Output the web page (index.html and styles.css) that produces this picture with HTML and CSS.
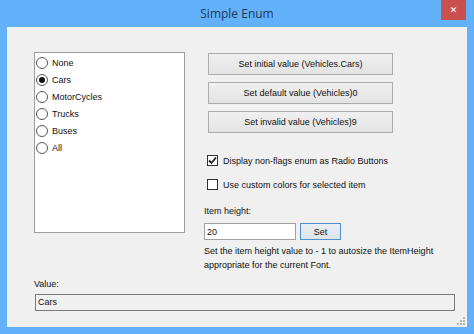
FILE: index.html
```html
<!DOCTYPE html>
<html lang="en">
<head>
    <meta charset="UTF-8">
    <title>Simple Enum</title>
    <link rel="stylesheet" href="styles.css">
</head>
<body>
    <div class="window">
        <div class="titlebar">
            <span class="title">Simple Enum</span>
            <button class="close" type="button">&#x2715;</button>
        </div>
        <div class="client">
            <div class="main-row">
                <div class="listbox">
                    <label class="radio-item"><input type="radio" name="vehicle"><span>None</span></label>
                    <label class="radio-item"><input type="radio" name="vehicle" checked><span>Cars</span></label>
                    <label class="radio-item"><input type="radio" name="vehicle"><span>MotorCycles</span></label>
                    <label class="radio-item"><input type="radio" name="vehicle"><span>Trucks</span></label>
                    <label class="radio-item"><input type="radio" name="vehicle"><span>Buses</span></label>
                    <label class="radio-item"><input type="radio" name="vehicle"><span>All</span></label>
                </div>
                <div class="side">
                    <div class="actions">
                        <button class="btn" type="button">Set initial value (Vehicles.Cars)</button>
                        <button class="btn" type="button">Set default value (Vehicles)0</button>
                        <button class="btn" type="button">Set invalid value (Vehicles)9</button>
                    </div>
                    <div class="options">
                        <label class="check-row">
                            <span class="checkbox checked">
                                <svg width="9" height="9" viewBox="0 0 9 9"><polyline points="1,4.5 3.5,7 8,1.5" fill="none" stroke="#222" stroke-width="1.8"/></svg>
                            </span>
                            <span>Display non-flags enum as Radio Buttons</span>
                        </label>
                        <label class="check-row">
                            <span class="checkbox"></span>
                            <span>Use custom colors for selected item</span>
                        </label>
                    </div>
                    <div class="item-height">
                        <div class="field-label">Item height:</div>
                        <div class="input-row">
                            <input class="text-input" type="text" value="20">
                            <button class="btn btn-set" type="button">Set</button>
                        </div>
                        <p class="help">Set the item height value to - 1 to autosize the ItemHeight<br>appropriate for the current Font.</p>
                    </div>
                </div>
            </div>
            <div class="value-section">
                <div class="field-label">Value:</div>
                <div class="value-box">Cars</div>
            </div>
            <span class="grip">
                <svg width="8" height="8" viewBox="0 0 8 8" fill="#b5b5b5">
                    <rect x="6" y="0" width="2" height="2"/>
                    <rect x="3" y="3" width="2" height="2"/><rect x="6" y="3" width="2" height="2"/>
                    <rect x="0" y="6" width="2" height="2"/><rect x="3" y="6" width="2" height="2"/><rect x="6" y="6" width="2" height="2"/>
                </svg>
            </span>
        </div>
    </div>
</body>
</html>
```

FILE: styles.css
```css
body {
    margin: 0;
    background-color: #63b1f8;
    font-family: "Liberation Sans", Arial, sans-serif;
    font-size: 9px;
    color: #111;
}

.window {
    width: 474px;
    height: 334px;
    display: flex;
    flex-direction: column;
}

.titlebar {
    height: 27px;
    display: flex;
    align-items: center;
    justify-content: center;
    position: relative;
}

.title {
    font-family: "Open Sans", "Noto Sans", sans-serif;
    font-size: 12px;
    color: #1f3957;
    margin-top: -1px;
}

.close {
    position: absolute;
    top: 0;
    right: 8px;
    width: 25px;
    height: 20px;
    border: none;
    padding: 0;
    background-color: #c9504f;
    color: #fff;
    font-family: "DejaVu Sans", sans-serif;
    font-size: 9px;
    font-weight: bold;
}

.client {
    flex: 1;
    margin: 0 7px 7px;
    background-color: #f0f0f0;
    padding: 25px 12px 0 27px;
    position: relative;
}

.main-row {
    display: flex;
    gap: 19px;
}

.listbox {
    width: 151px;
    height: 181px;
    box-sizing: border-box;
    border: 1px solid #9c9c9c;
    background-color: #fff;
    padding: 1px 0 0 1px;
}

.radio-item {
    display: flex;
    align-items: center;
    height: 17px;
    gap: 4px;
}

.radio-item input {
    appearance: none;
    -webkit-appearance: none;
    width: 12px;
    height: 12px;
    margin: 0;
    border: 1px solid #555;
    border-radius: 50%;
    background-color: #fff;
    display: flex;
    align-items: center;
    justify-content: center;
}

.radio-item input:checked::after {
    content: "";
    width: 6px;
    height: 6px;
    border-radius: 50%;
    background-color: #111;
}

.side {
    width: 251px;
}

.actions {
    display: flex;
    flex-direction: column;
    gap: 7px;
    margin: 1px 0 0 4px;
    width: 185px;
}

.btn {
    height: 22px;
    padding: 0;
    border: 1px solid #acacac;
    background: linear-gradient(#f0f0f0, #e3e3e3);
    font-family: "Liberation Sans", Arial, sans-serif;
    font-size: 9px;
    color: #111;
}

.options {
    display: flex;
    flex-direction: column;
    gap: 11px;
    margin: 21px 0 0 3px;
}

.check-row {
    display: flex;
    align-items: center;
    height: 13px;
    gap: 5px;
}

.checkbox {
    width: 11px;
    height: 11px;
    box-sizing: border-box;
    border: 1px solid #333;
    background-color: #fff;
    display: flex;
    align-items: center;
    justify-content: center;
}

.item-height {
    margin-top: 14px;
}

.field-label {
    line-height: 13px;
}

.input-row {
    display: flex;
    gap: 4px;
    margin-top: 5px;
}

.text-input {
    width: 92px;
    height: 17px;
    box-sizing: border-box;
    margin: 0;
    border: 1px solid #a0a0a0;
    padding: 0 2px;
    font-family: "Liberation Sans", Arial, sans-serif;
    font-size: 9px;
    color: #111;
}

.btn-set {
    width: 41px;
    height: 17px;
    border-color: #4f8fd0;
    background: linear-gradient(#e9eef3, #dde4ea);
}

.help {
    margin: 4px 0 0;
    line-height: 14px;
}

.value-section {
    margin-top: 6px;
}

.value-box {
    width: 420px;
    height: 17px;
    box-sizing: border-box;
    margin: 3px 0 0 1px;
    border: 1px solid #7a7a7a;
    padding: 0 2px;
    line-height: 15px;
}

.grip {
    position: absolute;
    right: 2px;
    bottom: 2px;
    display: flex;
}
```
